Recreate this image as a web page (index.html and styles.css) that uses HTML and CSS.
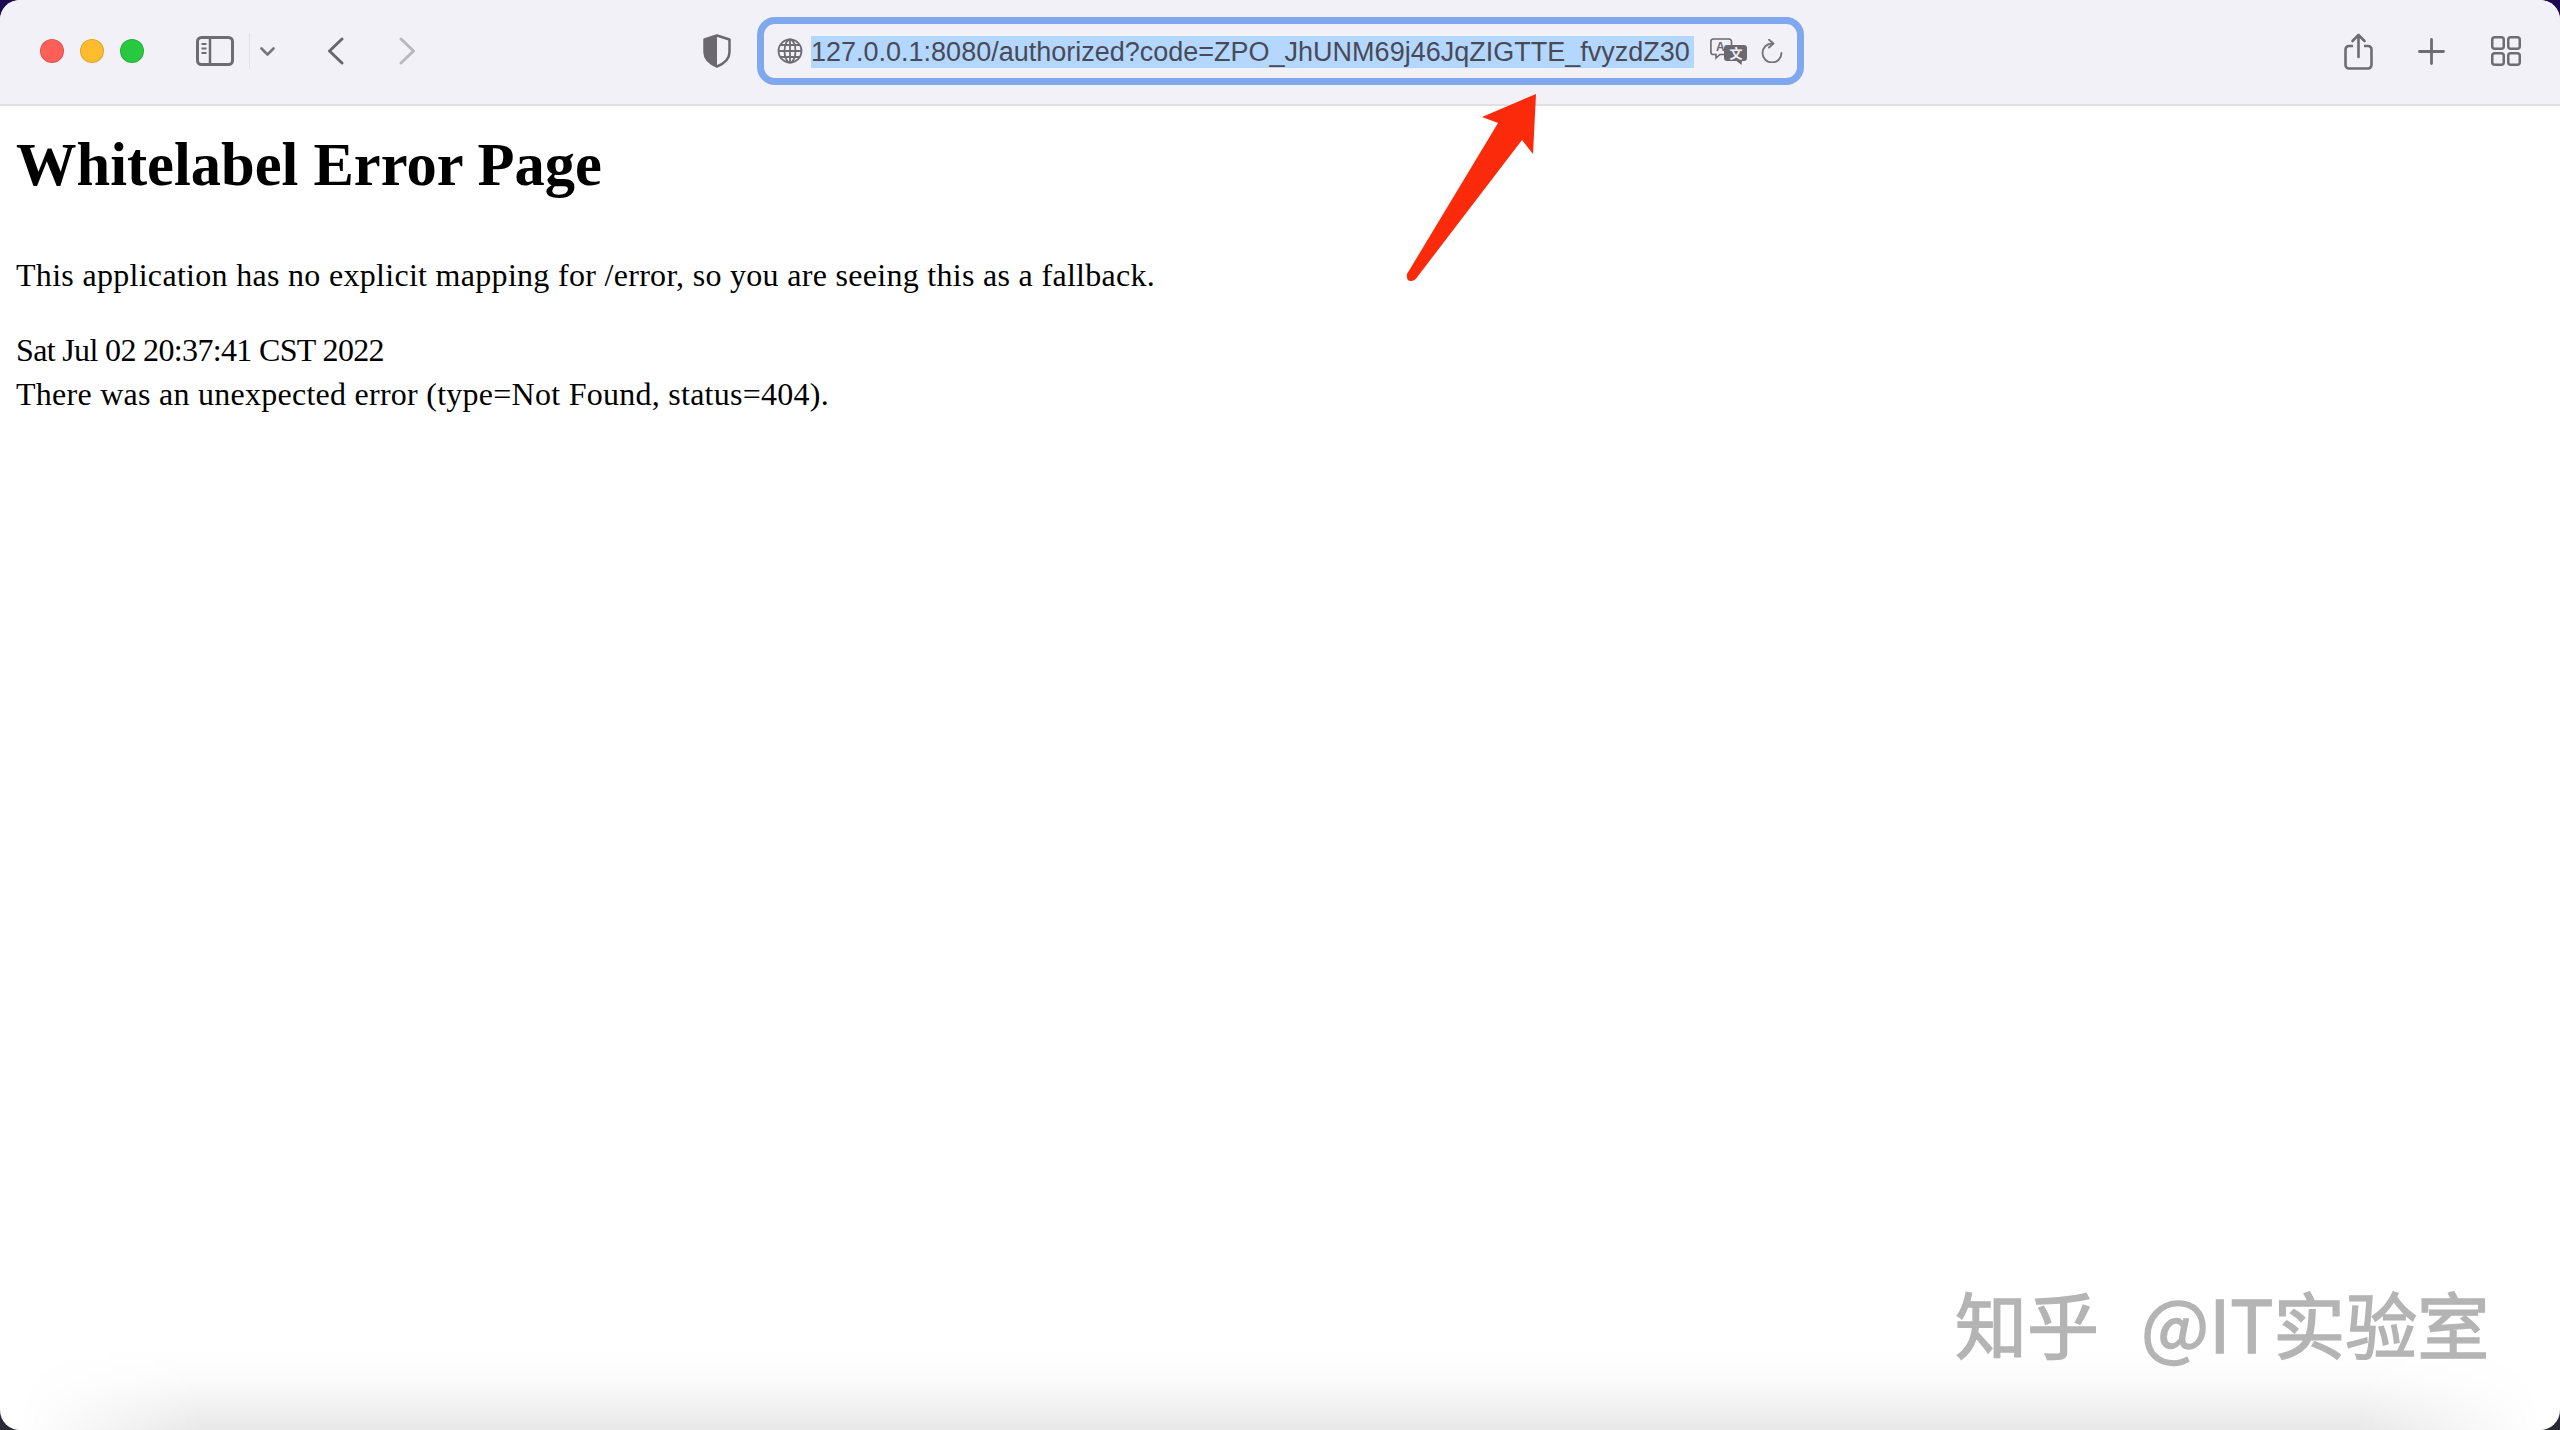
FILE: index.html
```html
<!DOCTYPE html>
<html lang="en">
<head>
<meta charset="utf-8">
<title>Whitelabel Error Page</title>
<link rel="stylesheet" href="styles.css">
</head>
<body>
<div class="window">
  <header class="toolbar">
    <span class="light red"></span>
    <span class="light yellow"></span>
    <span class="light green"></span>
    <svg class="ic sidebar" width="38" height="30" viewBox="0 0 38 30"><rect x="1.500" y="1.500" width="35" height="27" rx="4" fill="none" stroke="#6e6c73" stroke-width="3"/><path d="M14 2v26" stroke="#6e6c73" stroke-width="2.500"/><path d="M5.500 8h5M5.500 12.500h5M5.500 17h5" stroke="#6e6c73" stroke-width="2"/></svg>
    <span class="divider"></span>
    <svg class="ic chevron" width="15" height="9" viewBox="0 0 15 9"><path d="M1.500 1.500l6 6 6-6" fill="none" stroke="#77757c" stroke-width="2.600" stroke-linecap="round" stroke-linejoin="round"/></svg>
    <svg class="ic back" width="17" height="28" viewBox="0 0 17 28"><path d="M15 2L2.500 14 15 26" fill="none" stroke="#69676e" stroke-width="3" stroke-linecap="round" stroke-linejoin="round"/></svg>
    <svg class="ic forward" width="17" height="28" viewBox="0 0 17 28"><path d="M2 2l12.500 12L2 26" fill="none" stroke="#b9b8bd" stroke-width="3" stroke-linecap="round" stroke-linejoin="round"/></svg>
    <svg class="ic shield" width="28" height="34" viewBox="0 0 28 34"><path d="M14 1.500L26.500 5.500V18C26.500 25 20 30 14 32.500 8 30 1.500 25 1.500 18V5.500z" fill="#f3f1f8" stroke="#6b696f" stroke-width="2.500" stroke-linejoin="round"/><path d="M14 1.500L1.500 5.500V18C1.500 25 8 30 14 32.500z" fill="#6b696f"/></svg>
    <div class="urlbar">
      <svg class="ic globe" width="26" height="26" viewBox="0 0 26 26"><g fill="none" stroke="#6f6d74" stroke-width="1.800"><circle cx="13" cy="13" r="11.500"/><ellipse cx="13" cy="13" rx="5.500" ry="11.500"/><path d="M13 1.500v23M1.500 13h23M3.200 7h19.600M3.200 19h19.600"/></g></svg>
      <span class="url">127.0.0.1:8080/authorized?code=ZPO_JhUNM69j46JqZIGTTE_fvyzdZ30</span>
      <svg class="ic translate" width="37" height="27" viewBox="0 0 37 27"><path d="M3 1h16a2.500 2.500 0 0 1 2.500 2.500V14a2.500 2.500 0 0 1-2.500 2.500H10L6 20v-3.500H3A2.500 2.500 0 0 1 .9 14V3.500A2.500 2.500 0 0 1 3 1z" fill="#f3f1f8" stroke="#6b696f" stroke-width="1.600"/><text class="tr-a" x="6" y="13">A</text><path d="M17 7h17a3 3 0 0 1 3 3v10a3 3 0 0 1-3 3h-2l-.5 4-5-4H17a3 3 0 0 1-3-3V10a3 3 0 0 1 3-3z" fill="#6b696f"/><text class="tr-b" x="19.500" y="20">文</text></svg>
      <svg class="ic reload" width="22" height="24" viewBox="0 0 22 24"><path d="M11 4.500A9.500 9.500 0 1 0 20.500 14" fill="none" stroke="#77757c" stroke-width="1.900" stroke-linecap="round"/><path d="M8 .8L12.500 4.500 8 8.500" fill="none" stroke="#77757c" stroke-width="1.900" stroke-linecap="round" stroke-linejoin="round"/></svg>
    </div>
    <svg class="ic share" width="29" height="37" viewBox="0 0 29 37"><path d="M9 13H5a3.500 3.500 0 0 0-3.500 3.500V32A3.500 3.500 0 0 0 5 35.500h19a3.500 3.500 0 0 0 3.500-3.500V16.500A3.500 3.500 0 0 0 24 13h-4" fill="none" stroke="#6e6c73" stroke-width="2.600"/><path d="M14.500 24V2M8.500 8l6-6 6 6" fill="none" stroke="#6e6c73" stroke-width="2.600" stroke-linecap="round" stroke-linejoin="round"/></svg>
    <svg class="ic plus" width="27" height="27" viewBox="0 0 27 27"><path d="M13.500 1.500v24M1.500 13.500h24" stroke="#6e6c73" stroke-width="2.800" stroke-linecap="round"/></svg>
    <svg class="ic tabs" width="30" height="30" viewBox="0 0 30 30"><g fill="none" stroke="#6e6c73" stroke-width="2.500"><rect x="1.250" y="1.250" width="11.500" height="11.500" rx="2.500"/><rect x="17.250" y="1.250" width="11.500" height="11.500" rx="2.500"/><rect x="1.250" y="17.250" width="11.500" height="11.500" rx="2.500"/><rect x="17.250" y="17.250" width="11.500" height="11.500" rx="2.500"/></g></svg>
  </header>
  <main class="page">
    <h1 class="title">Whitelabel Error Page</h1>
    <p class="lead">This application has no explicit mapping for /error, so you are seeing this as a fallback.</p>
    <div class="date">Sat Jul 02 20:37:41 CST 2022</div>
    <div class="status">There was an unexpected error (type=Not Found, status=404).</div>
  </main>
  <div class="shade"></div>
  <svg class="arrow" width="140" height="200" viewBox="1400 90 140 200"><path d="M1536 94L1482 117 1498 123 1407 274Q1406 281 1411 281 1415 281 1418 276L1522 140 1533 154z" fill="#fb2a0a"/></svg>
  <div class="mark"><span class="mark-a">知乎</span><span class="mark-b">@IT</span><span>实验室</span></div>
</div>
</body>
</html>
```
FILE: styles.css
```css
* { box-sizing: border-box; }
html, body { margin: 0; height: 100%; }
body { background: linear-gradient(#1d0a50 0 50%, #2a2a33 50%); overflow: hidden; }
.window {
  position: relative;
  height: 1430px;
  background: #fff;
  border-radius: 20px;
  overflow: hidden;
  display: flex;
  flex-direction: column;
}
.toolbar {
  flex: none;
  height: 106px;
  padding: 0 0 2px 40px;
  display: flex;
  align-items: center;
  background: #f3f1f8;
  border-bottom: 2px solid #e0dfe3;
}
.light { width: 24px; height: 24px; border-radius: 50%; margin-right: 16px; border: 1px solid rgba(0,0,0,.12); }
.red { background: #fe5f57; }
.yellow { background: #febc2e; }
.green { background: #28c840; margin-right: 0; }
.ic { display: block; flex: none; }
.sidebar { margin-left: 52px; }
.divider { width: 1px; height: 36px; margin-left: 15px; background: #e0dfe4; }
.chevron { margin-left: 10px; }
.back { margin-left: 52px; }
.forward { margin-left: 55px; }
.shield { margin-left: 287px; }
.urlbar {
  flex: none;
  width: 1047px;
  height: 68px;
  margin-left: 26px;
  display: flex;
  align-items: center;
  border: 7px solid #7fa8ef;
  border-radius: 18px;
  background: #f3f1f8;
}
.globe { margin-left: 13px; }
.url {
  flex: none;
  width: 883px;
  height: 32px;
  margin: 2px 0 0 8px;
  white-space: nowrap;
  background: #b3d7ff;
  color: #4a4a55;
  font: 27px/33px "Liberation Sans", Arial, sans-serif;
}
.translate { margin-left: 16px; }
.tr-a { font: 700 12px "Liberation Sans", sans-serif; fill: #6b696f; }
.tr-b { font: 700 13px "Noto Sans CJK SC", sans-serif; fill: #f3f1f8; }
.reload { margin-left: 14px; }
.share { margin-left: 540px; }
.plus { margin-left: 45px; }
.tabs { margin-left: 46px; }
.page { flex: 1; padding: 23px 16px 0; color: #000; font-family: "Liberation Serif", "Times New Roman", serif; font-size: 32px; line-height: 44px; }
.title { margin: 0 0 52px; font-size: 60.500px; line-height: 72px; font-weight: 700; }
.lead { margin: 0 0 31px; letter-spacing: .3px; }
.date { letter-spacing: -.65px; }
.status { letter-spacing: .26px; }
.shade {
  position: absolute;
  left: 0; right: 0; bottom: 0;
  height: 80px;
  background: linear-gradient(rgba(0,0,0,0), rgba(0,0,0,.02) 40%, rgba(0,0,0,.09));
  -webkit-mask-image: linear-gradient(90deg, transparent 20px, #000 200px, #000 2360px, transparent 2540px);
  mask-image: linear-gradient(90deg, transparent 20px, #000 200px, #000 2360px, transparent 2540px);
}
.arrow { position: absolute; left: 1400px; top: 90px; }
.mark {
  position: absolute;
  left: 1955px;
  top: 1272px;
  display: flex;
  color: #b4b4b4;
  -webkit-text-stroke: 1.500px #b4b4b4;
  font: 400 72px/100px "Noto Sans CJK SC", sans-serif;
  white-space: nowrap;
}
.mark-a { margin-right: 42px; }
```
